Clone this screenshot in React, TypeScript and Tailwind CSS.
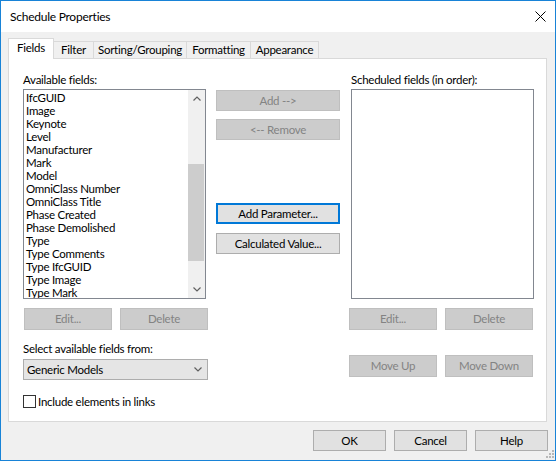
import React from "react";

const fields = [
  "IfcGUID",
  "Image",
  "Keynote",
  "Level",
  "Manufacturer",
  "Mark",
  "Model",
  "OmniClass Number",
  "OmniClass Title",
  "Phase Created",
  "Phase Demolished",
  "Type",
  "Type Comments",
  "Type IfcGUID",
  "Type Image",
  "Type Mark",
];

function Btn({
  label,
  w,
  h = "h-[21px]",
  disabled,
  focused,
}: {
  label: string;
  w: string;
  h?: string;
  disabled?: boolean;
  focused?: boolean;
}) {
  let cls = "bg-[#e1e1e1] border border-[#adadad] text-black";
  if (disabled) cls = "bg-[#cccccc] border border-[#bfbfbf] text-[#838383]";
  if (focused) cls = "bg-[#e1e1e1] border-2 border-[#0078d7] text-black";
  return (
    <div className={`${w} ${h} ${cls} flex items-center justify-center leading-none`}>
      {label}
    </div>
  );
}

function Chevron({ up }: { up?: boolean }) {
  return (
    <svg width="8" height="5" viewBox="0 0 8 5">
      <path
        d={up ? "M0.5 4.5 L4 1 L7.5 4.5" : "M0.5 0.5 L4 4 L7.5 0.5"}
        fill="none"
        stroke="#606060"
        strokeWidth="1.2"
      />
    </svg>
  );
}

export default function App() {
  return (
    <div
      className="relative w-[556px] h-[461px] border border-[#1883d7] bg-[#f0f0f0] flex flex-col text-[11.5px] tracking-[-0.25px] text-black"
      style={{ fontFamily: "Lato, 'Noto Sans', sans-serif" }}
    >
      {/* title bar */}
      <div className="h-[31px] bg-white flex items-center justify-between pl-[9px] pr-[9px]">
        <span className="text-[12px]">Schedule Properties</span>
        <svg width="11" height="11" viewBox="0 0 11 11">
          <path d="M0.5 0.5 L10.5 10.5 M10.5 0.5 L0.5 10.5" stroke="#000" strokeWidth="1" />
        </svg>
      </div>

      <div className="flex-1 pl-[7px] pt-[6px]">
        {/* tabs */}
        <div className="relative z-10 h-[20px] flex items-end">
          <div className="w-[46px] h-[21px] -mb-px bg-white border-x border-t border-[#d9d9d9] flex items-center justify-center pb-[2px]">
            Fields
          </div>
          <div className="w-[40px] h-[17px] border-t border-r border-[#d9d9d9] flex items-center justify-center">
            Filter
          </div>
          <div className="w-[93px] h-[17px] border-t border-r border-[#d9d9d9] flex items-center justify-center">
            Sorting/Grouping
          </div>
          <div className="w-[64px] h-[17px] border-t border-r border-[#d9d9d9] flex items-center justify-center">
            Formatting
          </div>
          <div className="w-[68px] h-[17px] border-t border-r border-[#d9d9d9] flex items-center justify-center">
            Appearance
          </div>
        </div>

        {/* panel */}
        <div className="w-[539px] h-[364px] bg-white border border-[#d9d9d9] flex pl-[14px]">
          {/* left column */}
          <div className="w-[185px] flex flex-col pt-[13px]">
            <div className="h-[15px] leading-[15px]">Available fields:</div>
            <div className="mt-[2px] w-[183px] h-[210px] border border-[#828790] flex overflow-hidden">
              <div className="flex-1 pl-[2px] pt-[1px] overflow-hidden">
                {fields.map((f) => (
                  <div key={f} className="h-[13px] leading-[13px] whitespace-nowrap">
                    {f}
                  </div>
                ))}
              </div>
              <div className="w-[17px] bg-[#f0f0f0] flex flex-col">
                <div className="h-[17px] flex items-center justify-center">
                  <Chevron up />
                </div>
                <div className="mt-[57px] h-[97px] mr-[1px] bg-[#cdcdcd]" />
                <div className="flex-1" />
                <div className="h-[17px] flex items-center justify-center">
                  <Chevron />
                </div>
              </div>
            </div>
            <div className="mt-[9px] pl-[1px] flex gap-[8px]">
              <Btn label="Edit..." w="w-[88px]" h="h-[22px]" disabled />
              <Btn label="Delete" w="w-[88px]" h="h-[22px]" disabled />
            </div>
            <div className="mt-[11px] h-[15px] leading-[15px]">Select available fields from:</div>
            <div className="mt-[3px] w-[185px] h-[21px] bg-[#e5e5e5] border border-[#adadad] flex items-center justify-between pl-[3px] pr-[5px]">
              <span>Generic Models</span>
              <Chevron />
            </div>
            <div className="mt-[15px] flex items-center h-[13px]">
              <div className="w-[13px] h-[13px] border border-[#333333] bg-white" />
              <span className="ml-[2px]">Include elements in links</span>
            </div>
          </div>

          {/* middle column */}
          <div className="ml-[8px] w-[124px] flex flex-col pt-[31px]">
            <Btn label="Add -->" w="w-[124px]" disabled />
            <div className="mt-[8px]">
              <Btn label="<-- Remove" w="w-[124px]" disabled />
            </div>
            <div className="mt-[63px]">
              <Btn label="Add Parameter..." w="w-[124px]" focused />
            </div>
            <div className="mt-[9px]">
              <Btn label="Calculated Value..." w="w-[124px]" />
            </div>
          </div>

          {/* right column */}
          <div className="ml-[9px] w-[185px] flex flex-col pt-[13px]">
            <div className="h-[15px] leading-[15px] pl-[2px]">Scheduled fields (in order):</div>
            <div className="mt-[2px] ml-[2px] w-[183px] h-[210px] border border-[#828790] bg-white" />
            <div className="mt-[9px] flex gap-[8px]">
              <Btn label="Edit..." w="w-[88px]" h="h-[22px]" disabled />
              <Btn label="Delete" w="w-[88px]" h="h-[22px]" disabled />
            </div>
            <div className="mt-[25px] flex gap-[8px]">
              <Btn label="Move Up" w="w-[88px]" h="h-[22px]" disabled />
              <Btn label="Move Down" w="w-[88px]" h="h-[22px]" disabled />
            </div>
          </div>
        </div>

        {/* footer */}
        <div className="mt-[8px] pr-[7px] flex justify-end gap-[8px]">
          <Btn label="OK" w="w-[73px]" />
          <Btn label="Cancel" w="w-[73px]" />
          <Btn label="Help" w="w-[73px]" />
        </div>
      </div>

      {/* resize grip */}
      <svg className="absolute right-[1px] bottom-[2px]" width="8" height="8" viewBox="0 0 8 8">
        <rect x="6" y="0" width="2" height="2" fill="#b8b8b8" />
        <rect x="3" y="3" width="2" height="2" fill="#b8b8b8" />
        <rect x="6" y="3" width="2" height="2" fill="#b8b8b8" />
        <rect x="0" y="6" width="2" height="2" fill="#b8b8b8" />
        <rect x="3" y="6" width="2" height="2" fill="#b8b8b8" />
        <rect x="6" y="6" width="2" height="2" fill="#b8b8b8" />
      </svg>
    </div>
  );
}
